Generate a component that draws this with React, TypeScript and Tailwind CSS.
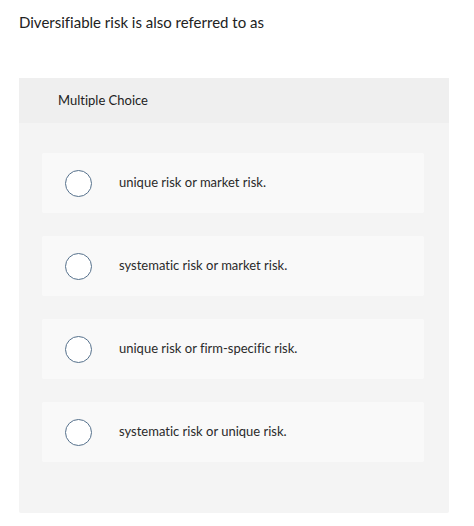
import React from 'react';

const options = [
  'unique risk or market risk.',
  'systematic risk or market risk.',
  'unique risk or firm-specific risk.',
  'systematic risk or unique risk.',
];

const App: React.FC = () => {
  return (
    <div className="w-[474px] h-[526px] bg-white font-['Lato','Liberation_Sans',sans-serif] [font-variant-ligatures:none] text-[#222]">
      <p className="pl-[19px] pt-[12px] text-[15px] leading-[20px]">Diversifiable risk is also referred to as</p>
      <div className="mx-[19px] mt-[46px] w-[430px] h-[435px] bg-[#f4f4f4] rounded-[2px]">
        <div className="h-[45px] bg-[#efefef] pl-[39px] flex items-center text-[13px] text-[#222]">Multiple Choice</div>
        <div className="pt-[30px] pl-[23px] pr-[25px] flex flex-col gap-[23px]">
          {options.map((opt) => (
            <div key={opt} className="h-[60px] bg-[#f9f9f9] rounded-[2px] flex items-center pl-[23px]">
              <span className="w-[27px] h-[27px] rounded-full border-[1.5px] border-[#56718c] bg-white shrink-0" />
              <span className="ml-[27px] text-[13px] text-[#2a2a2a]">{opt}</span>
            </div>
          ))}
        </div>
      </div>
    </div>
  );
};

export default App;
